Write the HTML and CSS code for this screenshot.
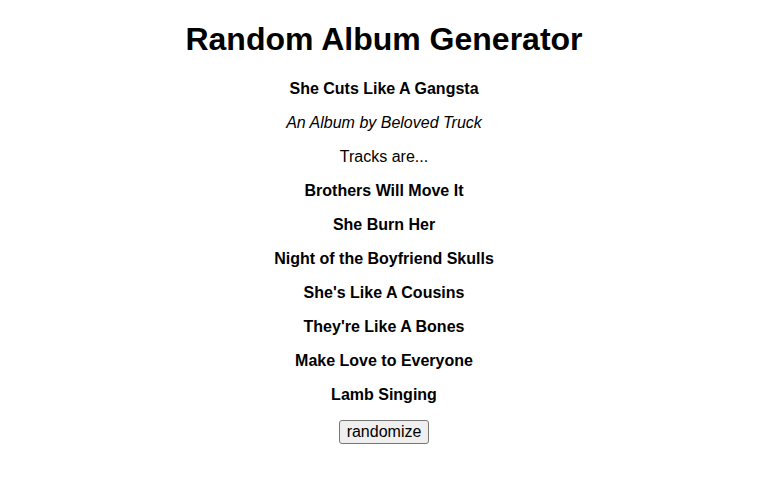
FILE: index.html
```html
<!DOCTYPE html>
<html>
<head>
<meta charset="utf-8">
<link rel="stylesheet" href="styles.css">
</head>
<body>
<div class="app">
  <h1 class="title">Random Album Generator</h1>
  <p class="line bold">She Cuts Like A Gangsta</p>
  <p class="line italic">An Album by Beloved Truck</p>
  <p class="line">Tracks are...</p>
  <p class="line bold">Brothers Will Move It</p>
  <p class="line bold">She Burn Her</p>
  <p class="line bold">Night of the Boyfriend Skulls</p>
  <p class="line bold">She's Like A Cousins</p>
  <p class="line bold">They're Like A Bones</p>
  <p class="line bold">Make Love to Everyone</p>
  <p class="line bold">Lamb Singing</p>
  <div class="actions"><button class="btn">randomize</button></div>
</div>
</body>
</html>
```
FILE: styles.css
```css
body {
  margin: 0;
  padding: 0 8px;
  font-family: "Liberation Sans", Arial, sans-serif;
  color: #000;
  background: #fff;
}
.app {
  text-align: center;
  padding-top: 1px;
}
.title {
  font-size: 32px;
  font-weight: bold;
  margin: 20.44px 0 21.44px;
}
.line {
  font-size: 16px;
  margin: 16px 0;
}
.bold { font-weight: bold; }
.italic { font-style: italic; }
.actions { margin-top: 16px; }
.btn {
  font-family: "Liberation Sans", Arial, sans-serif;
  font-size: 16px;
  padding: 2px 7px;
  background: #efefef;
  border: 1px solid #767676;
  border-radius: 3px;
  color: #000;
}
```
